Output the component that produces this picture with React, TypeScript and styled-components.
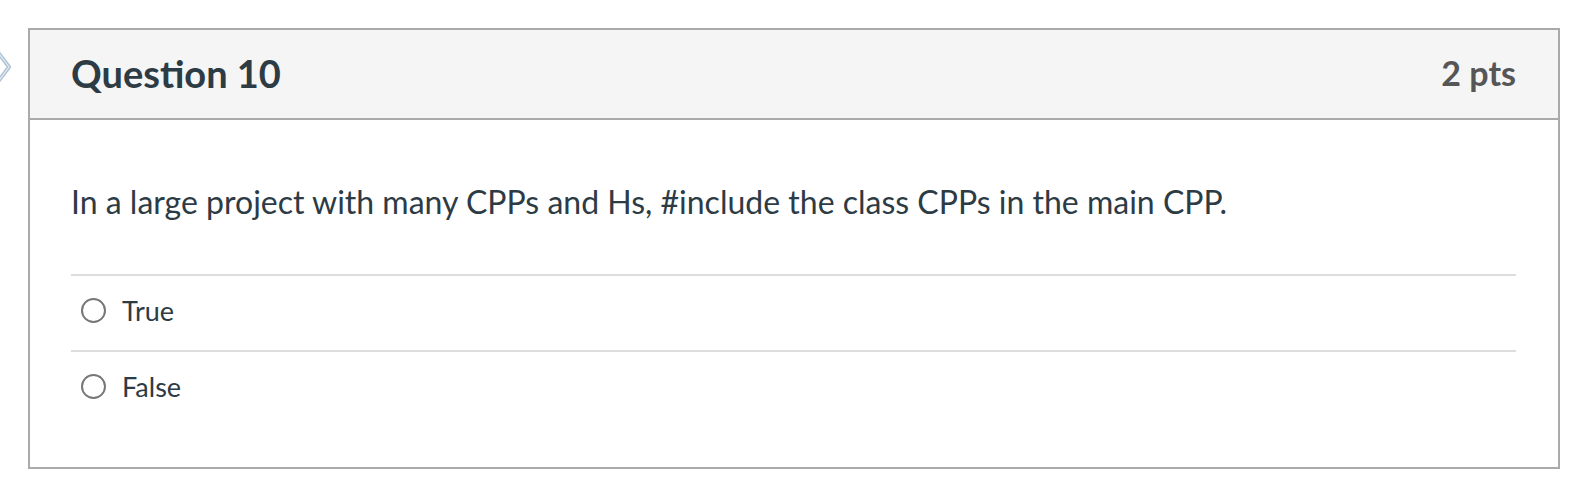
import React from 'react';
import styled, { createGlobalStyle } from 'styled-components';

const GlobalStyle = createGlobalStyle`
  html, body {
    margin: 0;
    padding: 0;
    background: #ffffff;
    font-family: Lato, "Open Sans", "Liberation Sans", sans-serif;
  }
`;

const Page = styled.div`
  display: flex;
  align-items: flex-start;
  padding-top: 28px;
`;

const Gutter = styled.div`
  width: 28px;
  flex: none;
  padding-top: 21px;
  display: flex;
  justify-content: flex-start;
`;

const QuestionBox = styled.div`
  width: 1532px;
  box-sizing: border-box;
  border: 2px solid #aaaaaa;
`;

const Header = styled.div`
  height: 90px;
  box-sizing: border-box;
  background: #f5f5f5;
  border-bottom: 2px solid #aaaaaa;
  display: flex;
  align-items: center;
  justify-content: space-between;
  padding: 0 42px 3px 41px;
`;

const Title = styled.h2`
  margin: 0;
  font-size: 38px;
  font-weight: 700;
  color: #2d3b45;
`;

const Points = styled.span`
  font-size: 34px;
  font-weight: 700;
  color: #565656;
`;

const Body = styled.div`
  padding: 62px 42px 41px 41px;
`;

const Prompt = styled.p`
  margin: 0 0 53px;
  font-size: 32px;
  color: #2d3b45;
`;

const Answers = styled.div`
  display: flex;
  flex-direction: column;
`;

const Answer = styled.label`
  display: flex;
  align-items: center;
  gap: 16px;
  height: 68px;
  padding: 0 0 6px 10px;
  border-top: 2px solid #dddddd;
  font-size: 27px;
  color: #2d3b45;
  cursor: pointer;
`;

const Radio = styled.span`
  width: 21px;
  height: 21px;
  border: 2px solid #777777;
  border-radius: 50%;
  flex: none;
`;

const answers = ['True', 'False'];

export default function App() {
  return (
    <>
      <GlobalStyle />
      <Page>
        <Gutter>
          <svg width="14" height="36" viewBox="0 0 14 36">
            <polyline points="-3,2 9,18 -3,34" fill="none" stroke="#aec2d4" strokeWidth="4" strokeLinejoin="round" />
            <polyline points="-3,2 9,18 -3,34" fill="none" stroke="#e4ecf2" strokeWidth="1.2" strokeLinejoin="round" />
          </svg>
        </Gutter>
        <QuestionBox>
          <Header>
            <Title>Question 10</Title>
            <Points>2 pts</Points>
          </Header>
          <Body>
            <Prompt>In a large project with many CPPs and Hs, #include the class CPPs in the main CPP.</Prompt>
            <Answers>
              {answers.map((a) => (
                <Answer key={a}>
                  <Radio />
                  {a}
                </Answer>
              ))}
            </Answers>
          </Body>
        </QuestionBox>
      </Page>
    </>
  );
}
